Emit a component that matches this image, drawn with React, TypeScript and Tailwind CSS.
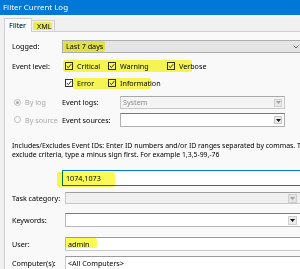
import React from "react";

function Check({ dark }: { dark?: boolean }) {
  return (
    <span className="inline-flex w-[8px] h-[8px] border border-[#333] bg-white items-center justify-center shrink-0">
      <svg width="6" height="6" viewBox="0 0 6 6">
        <path d="M0.8 3.1 L2.4 4.6 L5.2 1.2" fill="none" stroke={dark ? "#222" : "#333"} strokeWidth="1" />
      </svg>
    </span>
  );
}

function Radio({ on }: { on?: boolean }) {
  return (
    <span className="inline-flex w-[7px] h-[7px] rounded-full border border-[#bcbcbc] bg-white items-center justify-center shrink-0">
      {on && <span className="w-[3px] h-[3px] rounded-full bg-[#a8a8a8]" />}
    </span>
  );
}

function Arrow({ color }: { color: string }) {
  return (
    <svg width="5" height="3" viewBox="0 0 5 3">
      <path d="M0 0 L5 0 L2.5 3 Z" fill={color} />
    </svg>
  );
}

function Hl({ x, y, w, h }: { x: number; y: number; w: number; h: number }) {
  return (
    <div
      className="absolute bg-[#fafa55] mix-blend-multiply rounded-[2px]"
      style={{ left: x, top: y, width: w, height: h }}
    />
  );
}

export default function App() {
  return (
    <div className="relative w-[300px] h-[269px] overflow-hidden bg-[#f0f0f0] text-[7.2px] text-black font-['Noto_Sans',sans-serif] flex flex-col">
      <div className="h-[15px] shrink-0 bg-[#0078d7] text-white text-[7.9px] leading-[15px] pl-[3px]">
        Filter Current Log
      </div>
      <div className="h-[2px] shrink-0 bg-[#f7f7f7]" />
      <div className="h-[14px] shrink-0 flex items-end pl-[4px]">
        <div className="h-[14px] w-[28px] bg-[#fbfbfb] border border-b-0 border-[#d0d0d0] pl-[4px] leading-[13px] relative z-10 -mb-px">
          Filter
        </div>
        <div className="h-[11px] w-[23px] border border-l-0 border-b-0 border-[#d0d0d0] bg-[#f0f0f0] leading-[10px] pl-[5px]">
          XML
        </div>
      </div>
      <div className="flex-1 ml-[4px] border-l border-t border-[#d0d0d0] bg-[#f9f9f9] pl-[7px] flex flex-col">
        {/* Logged */}
        <div className="mt-[8px] h-[13px] flex items-center">
          <div className="w-[50px] shrink-0">Logged:</div>
          <div className="w-[242px] shrink-0 h-[13px] bg-[#e5e5e5] border border-[#adadad] flex items-center justify-between pl-[3px] pr-[4px]">
            <span>Last 7 days</span>
            <svg width="6" height="4" viewBox="0 0 6 4">
              <path d="M0.5 0.5 L3 3 L5.5 0.5" fill="none" stroke="#555" strokeWidth="0.9" />
            </svg>
          </div>
        </div>
        {/* Event level row 1 */}
        <div className="mt-[7px] h-[12px] flex items-center">
          <div className="w-[53px] shrink-0">Event level:</div>
          <div className="w-[43px] shrink-0 flex items-center gap-[4px]">
            <Check />
            <span>Critical</span>
          </div>
          <div className="w-[59px] shrink-0 flex items-center gap-[4px]">
            <Check />
            <span>Warning</span>
          </div>
          <div className="flex items-center gap-[4px]">
            <Check />
            <span>Verbose</span>
          </div>
        </div>
        {/* Event level row 2 */}
        <div className="mt-[5px] h-[12px] flex items-center">
          <div className="w-[53px] shrink-0" />
          <div className="w-[43px] shrink-0 flex items-center gap-[4px]">
            <Check dark />
            <span>Error</span>
          </div>
          <div className="flex items-center gap-[4px]">
            <Check />
            <span>Information</span>
          </div>
        </div>
        {/* By log */}
        <div className="mt-[7px] h-[13px] flex items-center">
          <div className="w-[50px] shrink-0 flex items-center gap-[4px] pl-[2px] text-[#a8a8a8]">
            <Radio on />
            <span>By log</span>
          </div>
          <div className="w-[58px] shrink-0">Event logs:</div>
          <div className="w-[165px] shrink-0 h-[13px] bg-[#f4f4f4] border border-[#c8c8c8] border-t-[#a8a8a8] flex items-center justify-between pl-[2px] pr-[2px] text-[#8a8a8a]">
            <span>System</span>
            <span className="w-[8px] h-[8px] bg-[#e8e8e8] border border-[#d0d0d0] flex items-center justify-center">
              <Arrow color="#a0a0a0" />
            </span>
          </div>
        </div>
        {/* By source */}
        <div className="mt-[4px] h-[14px] flex items-center">
          <div className="w-[50px] shrink-0 flex items-center gap-[4px] pl-[2px] text-[#a8a8a8]">
            <Radio />
            <span>By source</span>
          </div>
          <div className="w-[58px] shrink-0">Event sources:</div>
          <div className="w-[165px] shrink-0 h-[14px] bg-white border border-[#b0b0b0] border-t-[#7a7a7a] flex items-center justify-end pr-[2px]">
            <span className="w-[8px] h-[8px] bg-[#eaeaea] border border-[#c8c8c8] flex items-center justify-center">
              <Arrow color="#111" />
            </span>
          </div>
        </div>
        {/* Description */}
        <div className="mt-[15px] leading-[8.5px] whitespace-nowrap text-[6.9px]">
          <div>Includes/Excludes Event IDs: Enter ID numbers and/or ID ranges separated by commas. To</div>
          <div>exclude criteria, type a minus sign first. For example 1,3,5-99,-76</div>
        </div>
        {/* Event IDs */}
        <div className="mt-[11px] h-[16px] flex items-center">
          <div className="w-[50px] shrink-0" />
          <div className="w-[245px] shrink-0 h-[16px] bg-white border border-[#0078d7] flex items-center pl-[3px]">
            <span>1074,1073</span>
          </div>
        </div>
        {/* Task category */}
        <div className="mt-[6px] h-[12px] flex items-center">
          <div className="w-[53px] shrink-0">Task category:</div>
          <div className="w-[245px] shrink-0 h-[12px] bg-[#f0f0f0] border border-[#c8c8c8] border-t-[#a0a0a0] flex items-center justify-end">
            <span className="w-[9px] h-[9px] mr-[12px] bg-[#e4e4e4] border border-[#cfcfcf] flex items-center justify-center">
              <Arrow color="#a0a0a0" />
            </span>
          </div>
        </div>
        {/* Keywords */}
        <div className="mt-[9px] h-[14px] flex items-center">
          <div className="w-[53px] shrink-0">Keywords:</div>
          <div className="w-[245px] shrink-0 h-[14px] bg-white border border-[#b8b8b8] border-t-[#7a7a7a] flex items-center justify-end">
            <span className="w-[9px] h-[9px] mr-[12px] bg-[#ececec] border border-[#d0d0d0] flex items-center justify-center">
              <Arrow color="#111" />
            </span>
          </div>
        </div>
        {/* User */}
        <div className="mt-[10px] h-[14px] flex items-center">
          <div className="w-[53px] shrink-0">User:</div>
          <div className="w-[245px] shrink-0 h-[14px] bg-white border border-[#c8c8c8] border-t-[#9a9a9a] flex items-center pl-[2px]">
            <span>admin</span>
          </div>
        </div>
        {/* Computers */}
        <div className="mt-[5px] h-[14px] flex items-center">
          <div className="w-[53px] shrink-0">Computer(s):</div>
          <div className="w-[245px] shrink-0 h-[14px] bg-white border border-[#c8c8c8] border-t-[#9a9a9a] flex items-center pl-[2px]">
            <span>&lt;All Computers&gt;</span>
          </div>
        </div>
      </div>
      <Hl x={33} y={22} w={19} h={8} />
      <Hl x={63} y={41} w={42} h={11} />
      <Hl x={63} y={60} w={129} h={12} />
      <Hl x={73} y={78} w={78} h={11} />
      <Hl x={57} y={172} w={58} h={15} />
      <Hl x={65} y={238} w={32} h={10} />
    </div>
  );
}
